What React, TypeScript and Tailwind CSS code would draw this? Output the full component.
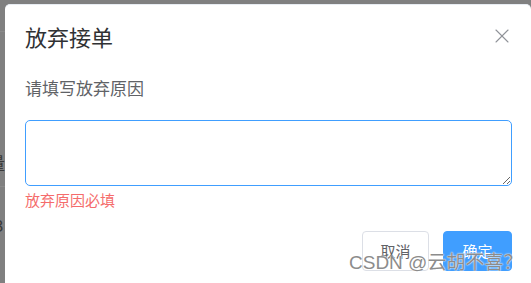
import { X } from "lucide-react";

const cjk = '"Noto Sans CJK SC", "Microsoft YaHei", sans-serif';

export default function App() {
  return (
    <div
      className="relative h-[283px] w-[531px] overflow-hidden bg-[#808080]"
      style={{ fontFamily: cjk }}
    >
      {/* page behind the overlay */}
      <div className="absolute left-0 top-0 h-full w-[5px]">
        <div className="mt-[31px] h-px bg-[#8a8a8a]" />
        <div className="absolute left-[-12px] top-[150px] text-[17px] text-[#3a3a3a]">
          量
        </div>
        <div className="absolute left-0 top-[186px] h-px w-full bg-[#8a8a8a]" />
        <div className="absolute left-[-6px] top-[212px] text-[17px] text-[#3a3a3a]">
          3
        </div>
      </div>

      {/* dialog */}
      <div className="relative ml-[5px] mt-[4px] h-[300px] w-[526px] rounded-[5px] border-t border-[#e8edf3] bg-white">
        <div className="flex items-center justify-between pl-[20px] pr-[17px] pt-[16px]">
          <h2 className="text-[22px] leading-[30px] text-[#303133]">放弃接单</h2>
          <X className="h-[24px] w-[24px] text-[#909399]" strokeWidth={1.1} />
        </div>

        <div className="pl-[20px] pr-[19px]">
          <p className="mt-[25px] text-[17px] leading-[24px] text-[#606266]">
            请填写放弃原因
          </p>
          <textarea
            className="mt-[20px] block h-[66px] w-full resize-y rounded-[5px] border border-[#409eff] px-[12px] py-[6px] text-[15px] outline-none"
            defaultValue=""
          />
          <p className="mt-[6px] text-[15px] leading-[16px] text-[#f56c6c]">
            放弃原因必填
          </p>
          <div className="mt-[23px] flex justify-end gap-[14px]">
            <button className="h-[40px] w-[67px] rounded-[4px] border border-[#dcdfe6] bg-white text-[15px] text-[#606266]">
              取消
            </button>
            <button className="h-[40px] w-[69px] rounded-[4px] border border-[#409eff] bg-[#409eff] text-[15px] text-white">
              确定
            </button>
          </div>
        </div>
      </div>

      {/* watermark */}
      <div
        className="pointer-events-none absolute left-[349px] top-[251px] whitespace-nowrap text-[19px] leading-[24px] text-[#8c8c8c]"
        style={{
          fontFamily: '"Liberation Sans", "Noto Sans CJK SC", sans-serif',
          textShadow: "0 0 2px #fff, 0 0 1px #fff",
        }}
      >
        CSDN @云胡不喜？
      </div>
    </div>
  );
}
